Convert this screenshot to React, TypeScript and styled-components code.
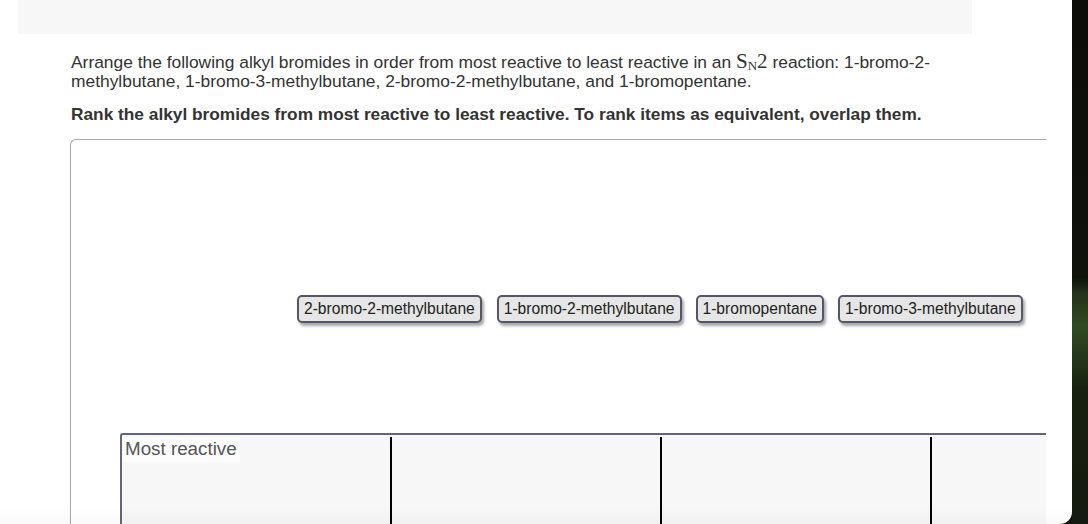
import React from 'react'
import styled, { createGlobalStyle } from 'styled-components'

const GlobalStyle = createGlobalStyle`
  html, body {
    margin: 0;
    padding: 0;
    background: #0e0f0b;
  }
  body {
    font-family: "Liberation Sans", Arial, sans-serif;
    color: #333;
  }
`

const Screen = styled.div`
  display: flex;
  width: 1088px;
  height: 524px;
  overflow: hidden;
`

const Panel = styled.div`
  position: relative;
  width: 1072px;
  height: 524px;
  flex: none;
  background: #fff;
  border-bottom-right-radius: 12px;
  overflow: hidden;
  display: flex;
  flex-direction: column;

  &::after {
    content: '';
    position: absolute;
    left: 0;
    right: 0;
    bottom: 0;
    height: 16px;
    background: linear-gradient(rgba(0, 0, 0, 0), rgba(0, 0, 0, 0.025));
    pointer-events: none;
  }
`

const Wallpaper = styled.div`
  flex: 1;
  background: linear-gradient(
    180deg,
    #0c0d09 0%,
    #0f110b 53%,
    #233419 56%,
    #324a23 62%,
    #26381b 68%,
    #182110 74%,
    #141a0f 100%
  );
`

const TopBar = styled.div`
  margin-left: 18px;
  width: 954px;
  height: 34px;
  background: #f7f7f7;
  flex: none;
`

const Content = styled.div`
  padding-left: 70px;
  display: flex;
  flex-direction: column;
`

const Prompt = styled.p`
  margin: 19px 0 0 1px;
  width: 875px;
  font-size: 17.4px;
  line-height: 18.5px;
  color: #333;
`

const Sn = styled.span`
  font-family: "Liberation Serif", "Times New Roman", serif;
  font-size: 21px;
  line-height: 0;
`

const Sub = styled.sub`
  font-size: 13px;
  vertical-align: -2px;
  line-height: 0;
`

const Instruction = styled.p`
  margin: 14.5px 0 0 1px;
  font-size: 17.3px;
  line-height: 19px;
  font-weight: bold;
  color: #333;
`

const DragArea = styled.div`
  margin-top: 15px;
  width: 975px;
  height: 400px;
  border-top: 1px solid #a8a8a8;
  border-left: 1px solid #a8a8a8;
  border-top-left-radius: 6px;
  display: flex;
  flex-direction: column;
`

const ItemsRow = styled.div`
  margin-top: 155px;
  padding-left: 226px;
  display: flex;
  gap: 14px;
`

const Chip = styled.div<{ $gap?: number }>`
  height: 28px;
  box-sizing: border-box;
  padding: 0 5px;
  margin-right: ${({ $gap }) => $gap ?? 0}px;
  border: 2px solid #56566a;
  border-radius: 5px;
  background: #e6e6e6;
  box-shadow: 2px 3px 3px rgba(0, 0, 0, 0.35);
  font-size: 15.6px;
  line-height: 24px;
  color: #222;
  white-space: nowrap;
`

const RankBox = styled.div`
  margin-top: 110px;
  margin-left: 49px;
  flex: 1;
  border-top: 2px solid #65657a;
  border-left: 2px solid #65657a;
  border-top-left-radius: 3px;
  background: #f7f7f7;
  display: flex;
`

const Column = styled.div`
  position: relative;
  width: 268px;
  flex: none;
  margin-top: 2px;
  border-right: 2px solid #000;
`

const Label = styled.span`
  position: absolute;
  left: 0;
  top: 0;
  padding: 1px 3px 2px 3px;
  background: #fcfcfc;
  font-size: 18.8px;
  line-height: 22px;
  color: #555;
`

const items = [
  { name: '2-bromo-2-methylbutane', gap: 1 },
  { name: '1-bromo-2-methylbutane', gap: 0 },
  { name: '1-bromopentane', gap: 0 },
  { name: '1-bromo-3-methylbutane', gap: 0 },
]

export default function App() {
  return (
    <Screen>
      <GlobalStyle />
      <Panel>
        <TopBar />
        <Content>
          <Prompt>
            Arrange the following alkyl bromides in order from most reactive to
            least reactive in an{' '}
            <Sn>
              S<Sub>N</Sub>2
            </Sn>{' '}
            reaction: 1-bromo-2-methylbutane, 1-bromo-3-methylbutane,
            2-bromo-2-methylbutane, and 1-bromopentane.
          </Prompt>
          <Instruction>
            Rank the alkyl bromides from most reactive to least reactive. To
            rank items as equivalent, overlap them.
          </Instruction>
          <DragArea>
            <ItemsRow>
              {items.map((it) => (
                <Chip key={it.name} $gap={it.gap}>
                  {it.name}
                </Chip>
              ))}
            </ItemsRow>
            <RankBox>
              <Column>
                <Label>Most reactive</Label>
              </Column>
              <Column />
              <Column />
              <Column />
            </RankBox>
          </DragArea>
        </Content>
      </Panel>
      <Wallpaper />
    </Screen>
  )
}
